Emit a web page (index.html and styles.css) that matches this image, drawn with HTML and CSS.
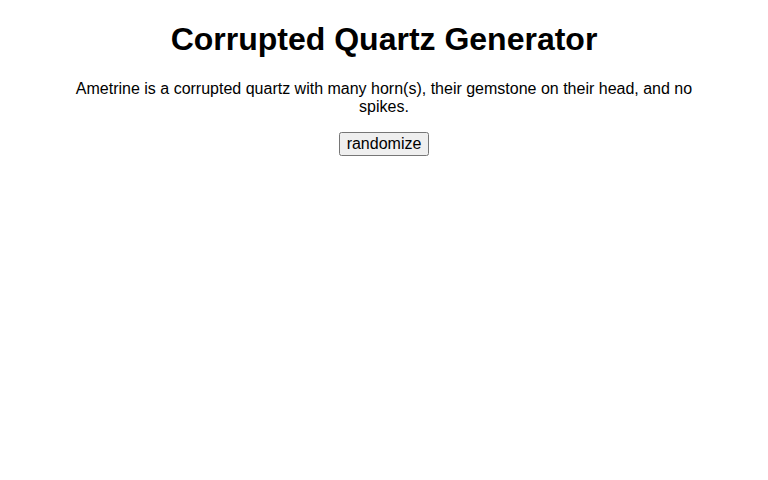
FILE: index.html
```html
<!DOCTYPE HTML>
<html>
 <head>
  <meta name="viewport" content="width=device-width, initial-scale=1.0">
  <link rel="stylesheet" href="styles.css">
 </head>
<body>
<div class="page">
  <h1>Corrupted Quartz Generator</h1>
  <p id="result">Ametrine is a corrupted quartz with many horn(s), their gemstone on their head, and no spikes.</p>
  <p><button class="randomize">randomize</button></p>
</div>
</body>
</html>
```

FILE: styles.css
```css
body {
  margin: 0;
  font-family: "Liberation Sans", Arial, sans-serif;
  color: #000;
  background: #fff;
}
.page {
  max-width: 640px;
  margin: 0 auto;
  text-align: center;
}
h1 {
  font-size: 32px;
}
.randomize {
  font-family: inherit;
  font-size: 16px;
}
```
